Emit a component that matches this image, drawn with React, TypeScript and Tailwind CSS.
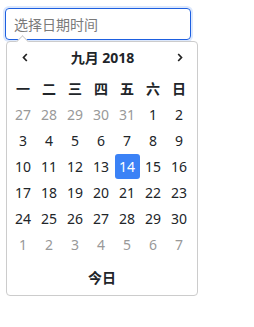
import { useState } from "react";

const weekdays = ["一", "二", "三", "四", "五", "六", "日"];

// September 2018 grid, starting Monday
const days: { d: number; muted: boolean }[] = [
  ...[27, 28, 29, 30, 31].map((d) => ({ d, muted: true })),
  ...Array.from({ length: 30 }, (_, i) => ({ d: i + 1, muted: false })),
  ...[1, 2, 3, 4, 5, 6, 7].map((d) => ({ d, muted: true })),
];

export default function App() {
  const [selected, setSelected] = useState(14);

  return (
    <div className="w-[254px] h-[327px] bg-white pl-[5px] pt-[8px] font-['Segoe_UI','Noto_Sans','Noto_Sans_CJK_SC',sans-serif] text-[#212529]">
      {/* Input */}
      <input
        type="text"
        placeholder="选择日期时间"
        className="block w-[186px] h-[32px] rounded-[4px] border border-[#1d5fe0] px-[8px] text-[14px] outline-none shadow-[0_0_0_2px_rgba(59,130,246,0.18)] placeholder:text-[#7a7a7a]"
      />

      {/* Popup */}
      <div className="relative ml-[1px] mt-[1px] w-[192px] h-[255px] rounded-[4px] border border-[#cccccc] bg-white">
        <div className="absolute left-[11px] top-[-5px] w-[9px] h-[9px] rotate-45 border-l border-t border-[#cccccc] bg-white" />

        {/* Header */}
        <div className="relative flex items-center justify-between h-[31px] pl-[13px] pr-[12px]">
          <button className="flex items-center justify-center w-[10px] h-[16px]">
            <svg width="6" height="9" viewBox="0 0 6 9">
              <path d="M4.8 1 L1.5 4.5 L4.8 8" fill="none" stroke="#222" strokeWidth="1.7" />
            </svg>
          </button>
          <span className="text-[14px] font-bold">九月 2018</span>
          <button className="flex items-center justify-center w-[10px] h-[16px]">
            <svg width="6" height="9" viewBox="0 0 6 9">
              <path d="M1.2 1 L4.5 4.5 L1.2 8" fill="none" stroke="#222" strokeWidth="1.7" />
            </svg>
          </button>
        </div>

        {/* Calendar grid */}
        <div className="mt-[2px] pl-[3px] grid grid-cols-[repeat(7,26px)] auto-rows-[26px] text-[14px]">
          {weekdays.map((w) => (
            <div key={w} className="flex items-center justify-center font-semibold">
              {w}
            </div>
          ))}
          {days.map((day, i) => {
            const active = !day.muted && day.d === selected;
            return (
              <div key={i} className="flex items-center justify-center">
                <button
                  onClick={() => !day.muted && setSelected(day.d)}
                  className={`flex items-center justify-center w-[25px] h-[25px] rounded-[3px] ${
                    active ? "bg-[#3b82f6] text-white" : day.muted ? "text-[#999999]" : ""
                  }`}
                >
                  {day.d}
                </button>
              </div>
            );
          })}
        </div>

        {/* Today */}
        <div className="mt-[8px] h-[24px] flex items-center justify-center text-[14px] font-bold">
          今日
        </div>
      </div>
    </div>
  );
}
